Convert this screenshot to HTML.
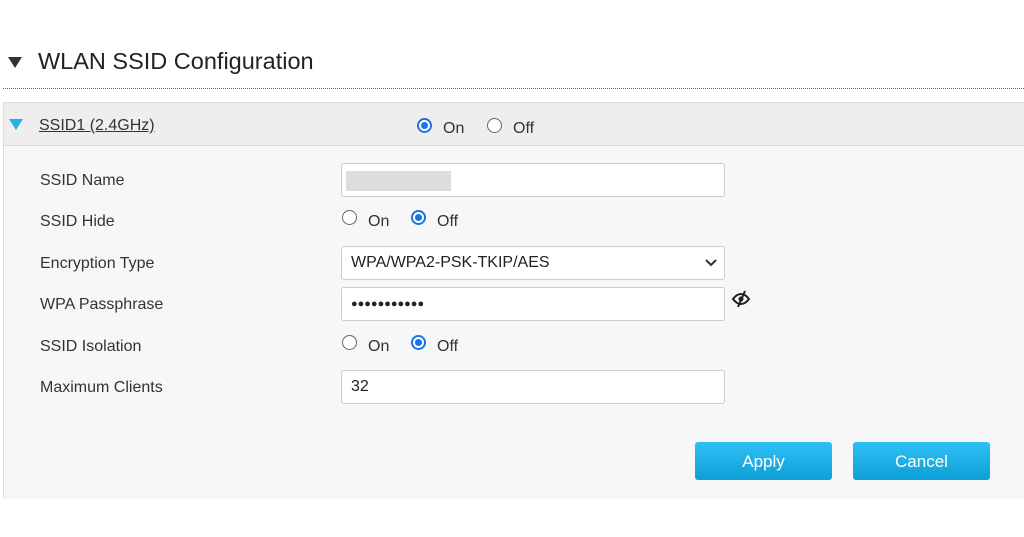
<!DOCTYPE html>
<html><head><style>
*{margin:0;padding:0;box-sizing:border-box}
body{width:1024px;height:537px;background:#fff;font-family:"Liberation Sans",sans-serif;position:relative;overflow:hidden;color:#333}
.a{position:absolute}
.lbl{position:absolute;left:40px;font-size:16px;color:#333}
.inp{position:absolute;left:341px;width:384px;height:34px;border:1px solid #ccc;border-radius:3px;background:#fff;font-size:16px;padding-left:9px;line-height:32px;color:#222}
.r{position:absolute;width:15px;height:15px;border:1px solid #666;border-radius:50%;background:#fff}
.r.on{border:2px solid #1a73e8}
.r.on::after{content:"";position:absolute;left:2px;top:2px;width:7px;height:7px;border-radius:50%;background:#1a73e8}
.t{position:absolute;font-size:16px;color:#333}
.btn{position:absolute;top:442px;width:137px;height:38px;border-radius:3px;background:linear-gradient(#2ec0f5,#0d9fd6);color:#fff;font-size:17px;text-align:center;line-height:40px}
</style></head><body>
<div class="a" style="left:8px;top:57px;width:0;height:0;border-left:7px solid transparent;border-right:7px solid transparent;border-top:11px solid #333"></div>
<div class="a" style="left:38px;top:48px;font-size:23.5px;color:#222">WLAN SSID Configuration</div>
<div class="a" style="left:3px;top:88px;width:1021px;border-top:1px dotted #666"></div>
<div class="a" style="left:3px;top:102px;width:1021px;height:397px;background:#f7f7f7;border-left:1px solid #ddd"></div>
<div class="a" style="left:3px;top:102px;width:1021px;height:44px;background:#eee;border:1px solid #ddd;border-right:none"></div>
<div class="a" style="left:9px;top:119px;width:0;height:0;border-left:7px solid transparent;border-right:7px solid transparent;border-top:11px solid #2aaee6"></div>
<div class="a" style="left:39px;top:117px;font-size:16px;text-decoration:underline;color:#333">SSID1 (2.4GHz)</div>
<div class="r on" style="left:417px;top:118px"></div><div class="t" style="left:443px;top:120px">On</div>
<div class="r" style="left:487px;top:118px"></div><div class="t" style="left:513px;top:120px">Off</div>

<div class="lbl" style="top:172px">SSID Name</div>
<div class="inp" style="top:163px"><div class="a" style="left:4px;top:7px;width:105px;height:20px;background:#ddd"></div></div>
<div class="lbl" style="top:213px">SSID Hide</div>
<div class="r" style="left:342px;top:210px"></div><div class="t" style="left:368px;top:213px">On</div>
<div class="r on" style="left:411px;top:210px"></div><div class="t" style="left:437px;top:213px">Off</div>
<div class="lbl" style="top:255px">Encryption Type</div>
<div class="inp" style="top:246px">WPA/WPA2-PSK-TKIP/AES<svg class="a" style="right:7px;top:12px" width="12" height="8" viewBox="0 0 12 8"><path d="M1 1l5 5 5-5" stroke="#333" stroke-width="2" fill="none"/></svg></div>
<div class="lbl" style="top:296px">WPA Passphrase</div>
<div class="inp" style="top:287px;font-size:11px;letter-spacing:0px">●●●●●●●●●●●</div>
<svg class="a" style="left:731px;top:290px" width="22" height="18" viewBox="0 0 22 18"><path d="M2 9c3-4 6-5 8-5s5 1 8 5c-3 4-6 5-8 5s-5-1-8-5z" fill="none" stroke="#222" stroke-width="2"/><circle cx="10" cy="9" r="2.5" fill="#222"/><path d="M14 1L7 17" stroke="#222" stroke-width="2"/></svg>
<div class="lbl" style="top:338px">SSID Isolation</div>
<div class="r" style="left:342px;top:335px"></div><div class="t" style="left:368px;top:338px">On</div>
<div class="r on" style="left:411px;top:335px"></div><div class="t" style="left:437px;top:338px">Off</div>
<div class="lbl" style="top:379px">Maximum Clients</div>
<div class="inp" style="top:370px">32</div>
<div class="btn" style="left:695px">Apply</div>
<div class="btn" style="left:853px">Cancel</div>
</body></html>
